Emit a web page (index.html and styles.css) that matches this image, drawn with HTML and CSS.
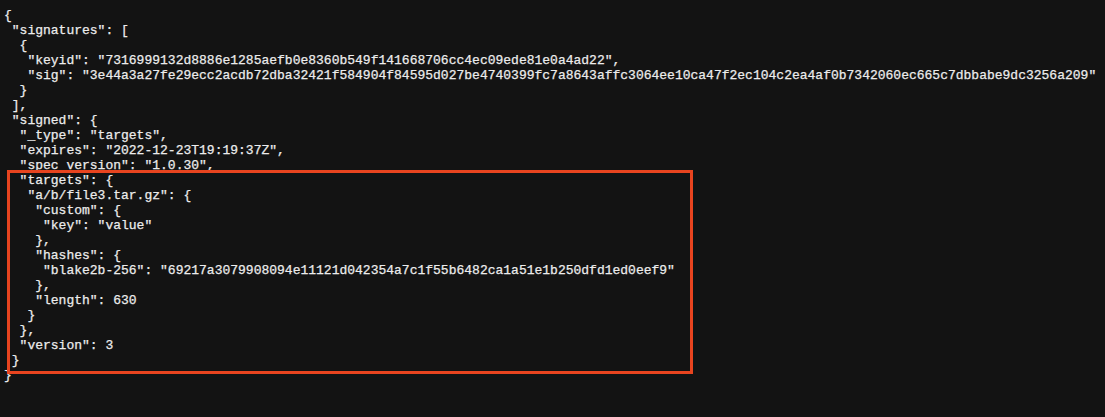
FILE: index.html
```html
<!DOCTYPE html>
<html>
<head>
<meta charset="utf-8">
<link rel="stylesheet" href="styles.css">
</head>
<body>
<main class="terminal">
<pre class="json">{
 "signatures": [
  {
   "keyid": "7316999132d8886e1285aefb0e8360b549f141668706cc4ec09ede81e0a4ad22",
   "sig": "3e44a3a27fe29ecc2acdb72dba32421f584904f84595d027be4740399fc7a8643affc3064ee10ca47f2ec104c2ea4af0b7342060ec665c7dbbabe9dc3256a209"
  }
 ],
 "signed": {
  "_type": "targets",
  "expires": "2022-12-23T19:19:37Z",
  "spec_version": "1.0.30",
  "targets": {
   "a/b/file3.tar.gz": {
    "custom": {
     "key": "value"
    },
    "hashes": {
     "blake2b-256": "69217a3079908094e11121d042354a7c1f55b6482ca1a51e1b250dfd1ed0eef9"
    },
    "length": 630
   }
  },
  "version": 3
 }
}</pre>
<div class="highlight"></div>
</main>
</body>
</html>
```
FILE: styles.css
```css
html, body {
  margin: 0;
  padding: 0;
  background: #131313;
}
.terminal {
  position: relative;
  width: 1105px;
  height: 417px;
  background: #131313;
  padding: 8px 0 0 4px;
  box-sizing: border-box;
  overflow: hidden;
}
.json {
  margin: 0;
  font-family: "Liberation Mono", "Courier New", monospace;
  font-size: 13px;
  line-height: 15px;
  color: #ececec;
  white-space: pre;
  -webkit-text-stroke: 0.25px #ececec;
}
.highlight {
  position: absolute;
  left: 7px;
  top: 170px;
  width: 686px;
  height: 204px;
  box-sizing: border-box;
  border: 3px solid #e8441f;
  pointer-events: none;
}
```
